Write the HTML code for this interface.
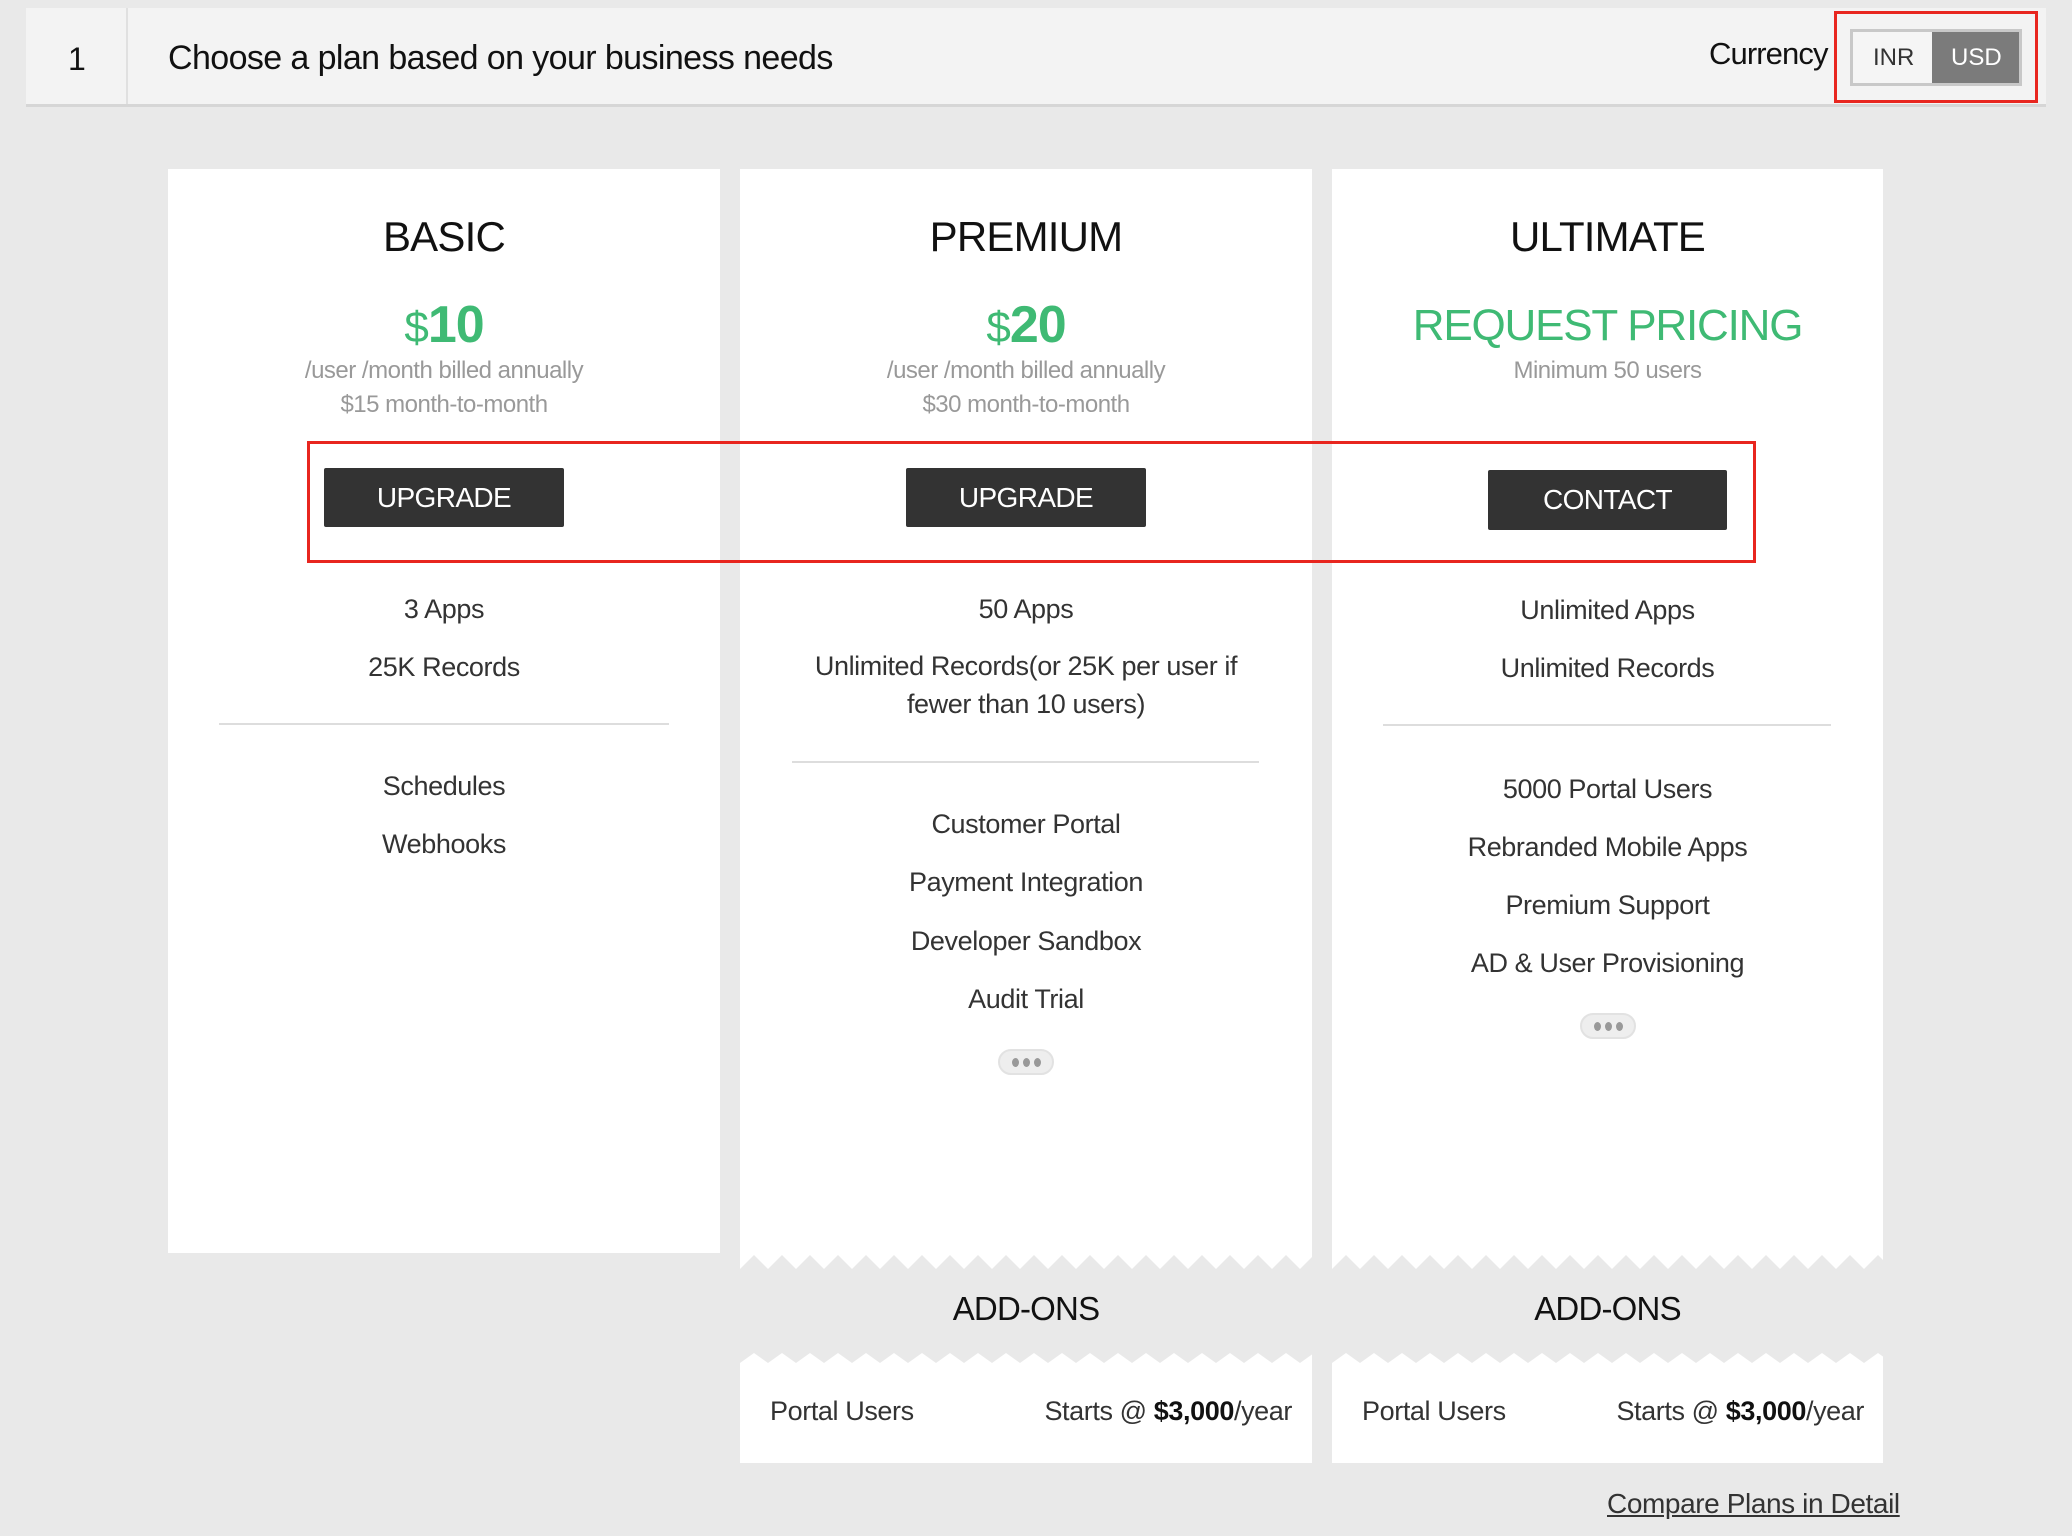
<!DOCTYPE html>
<html><head><meta charset="utf-8"><style>
*{margin:0;padding:0;box-sizing:border-box}
body{width:2072px;height:1536px;background:#e9e9e9;font-family:"Liberation Sans",sans-serif;position:relative;overflow:hidden;color:#222}
.a{position:absolute}
.c{position:absolute;text-align:center;white-space:nowrap}
.card{position:absolute;background:#fff}
.t{font-size:42px;color:#111;letter-spacing:-0.8px}
.p{font-size:52px;font-weight:bold;color:#3fba74;letter-spacing:-1px}
.s{font-size:24px;color:#999;letter-spacing:-0.5px}
.btn{position:absolute;background:#333;color:#fff;font-size:28px;display:flex;align-items:center;justify-content:center;border-radius:2px;letter-spacing:-0.6px}
.f{font-size:27px;color:#333;letter-spacing:-0.4px}
.hr{position:absolute;height:2px;background:#ddd}
.dots{position:absolute;width:56px;height:26px;border-radius:13px;background:#eee;border:2px solid #e2e2e2;display:flex;align-items:center;justify-content:center;gap:4px}
.dots i{width:7px;height:9px;border-radius:50%;background:#999;display:block}
</style></head><body>
<div class="a" style="left:26px;top:8px;width:2020px;height:99px;background:#f3f3f3;border-bottom:3px solid #d6d6d6"></div>
<div class="a" style="left:126px;top:8px;width:2px;height:96px;background:#e0e0e0"></div>
<div class="a" style="left:68px;top:41px;font-size:32px;color:#111">1</div>
<div class="a" style="left:168px;top:39px;font-size:34px;color:#111;letter-spacing:-0.6px">Choose a plan based on your business needs</div>
<div class="a" style="left:1709px;top:36px;font-size:31px;color:#111;letter-spacing:-0.9px">Currency</div>
<div class="a" style="left:1850px;top:29px;width:172px;height:57px;border:3px solid #c8c8c8;background:#f5f5f5"></div>
<div class="a" style="left:1932px;top:32px;width:87px;height:51px;background:#7b7b7b"></div>
<div class="a" style="left:1873px;top:44px;font-size:24px;color:#333">INR</div>
<div class="a" style="left:1951px;top:44px;font-size:24px;color:#fff">USD</div>
<div class="a" style="left:1834px;top:11px;width:204px;height:92px;border:3px solid #e8261f"></div>

<div class="card" style="left:168px;top:169px;width:552px;height:1084px"></div>
<div class="card" style="left:740px;top:169px;width:572px;height:1084px"></div>
<div class="card" style="left:1332px;top:169px;width:551px;height:1084px"></div>
<svg class="a" style="left:740px;top:1253px" width="572" height="16"><defs><pattern id="z1" width="28" height="16" patternUnits="userSpaceOnUse"><polygon points="0,0 28,0 28,16 14,2 0,16" fill="#fff"/></pattern></defs><rect width="572" height="16" fill="url(#z1)"/></svg>
<svg class="a" style="left:1332px;top:1253px" width="551" height="16"><rect width="551" height="16" fill="url(#z1)"/></svg>
<svg class="a" style="left:740px;top:1351px" width="572" height="16"><defs><pattern id="z2" width="28" height="16" patternUnits="userSpaceOnUse"><polygon points="0,16 0,12 14,2 28,12 28,16" fill="#fff"/></pattern></defs><rect width="572" height="16" fill="url(#z2)"/></svg>
<svg class="a" style="left:1332px;top:1351px" width="551" height="16"><rect width="551" height="16" fill="url(#z2)"/></svg>
<div class="card" style="left:740px;top:1366px;width:572px;height:97px"></div>
<div class="card" style="left:1332px;top:1366px;width:551px;height:97px"></div>

<div class="c t" style="left:168px;width:552px;top:213px">BASIC</div>
<div class="c t" style="left:740px;width:572px;top:213px">PREMIUM</div>
<div class="c t" style="left:1332px;width:551px;top:213px">ULTIMATE</div>
<div class="c p" style="left:168px;width:552px;top:295px"><span style="font-weight:normal;font-size:44px">$</span>10</div>
<div class="c p" style="left:740px;width:572px;top:295px"><span style="font-weight:normal;font-size:44px">$</span>20</div>
<div class="c" style="left:1332px;width:551px;top:301px;font-size:44px;color:#3fba74;letter-spacing:-1.2px">REQUEST PRICING</div>
<div class="c s" style="left:168px;width:552px;top:357px">/user /month billed annually</div>
<div class="c s" style="left:168px;width:552px;top:391px">$15 month-to-month</div>
<div class="c s" style="left:740px;width:572px;top:357px">/user /month billed annually</div>
<div class="c s" style="left:740px;width:572px;top:391px">$30 month-to-month</div>
<div class="c s" style="left:1332px;width:551px;top:357px">Minimum 50 users</div>

<div class="btn" style="left:324px;top:468px;width:240px;height:59px">UPGRADE</div>
<div class="btn" style="left:906px;top:468px;width:240px;height:59px">UPGRADE</div>
<div class="btn" style="left:1488px;top:470px;width:239px;height:60px">CONTACT</div>
<div class="a" style="left:307px;top:441px;width:1449px;height:122px;border:3px solid #e8261f"></div>

<div class="c f" style="left:168px;width:552px;top:594px">3 Apps</div>
<div class="c f" style="left:168px;width:552px;top:652px">25K Records</div>
<div class="hr" style="left:219px;top:723px;width:450px"></div>
<div class="c f" style="left:168px;width:552px;top:771px">Schedules</div>
<div class="c f" style="left:168px;width:552px;top:829px">Webhooks</div>

<div class="c f" style="left:740px;width:572px;top:594px">50 Apps</div>
<div class="c f" style="left:740px;width:572px;top:651px">Unlimited Records(or 25K per user if</div>
<div class="c f" style="left:740px;width:572px;top:689px">fewer than 10 users)</div>
<div class="hr" style="left:792px;top:761px;width:467px"></div>
<div class="c f" style="left:740px;width:572px;top:809px">Customer Portal</div>
<div class="c f" style="left:740px;width:572px;top:867px">Payment Integration</div>
<div class="c f" style="left:740px;width:572px;top:926px">Developer Sandbox</div>
<div class="c f" style="left:740px;width:572px;top:984px">Audit Trial</div>
<div class="dots" style="left:998px;top:1049px"><i></i><i></i><i></i></div>

<div class="c f" style="left:1332px;width:551px;top:595px">Unlimited Apps</div>
<div class="c f" style="left:1332px;width:551px;top:653px">Unlimited Records</div>
<div class="hr" style="left:1383px;top:724px;width:448px"></div>
<div class="c f" style="left:1332px;width:551px;top:774px">5000 Portal Users</div>
<div class="c f" style="left:1332px;width:551px;top:832px">Rebranded Mobile Apps</div>
<div class="c f" style="left:1332px;width:551px;top:890px">Premium Support</div>
<div class="c f" style="left:1332px;width:551px;top:948px">AD &amp; User Provisioning</div>
<div class="dots" style="left:1580px;top:1013px"><i></i><i></i><i></i></div>

<div class="c" style="left:740px;width:572px;top:1290px;font-size:33px;color:#111;letter-spacing:-0.8px">ADD-ONS</div>
<div class="c" style="left:1332px;width:551px;top:1290px;font-size:33px;color:#111;letter-spacing:-0.8px">ADD-ONS</div>
<div class="a f" style="left:770px;top:1396px">Portal Users</div>
<div class="a f" style="right:780px;top:1396px">Starts @ <b style="color:#111">$3,000</b>/year</div>
<div class="a f" style="left:1362px;top:1396px">Portal Users</div>
<div class="a f" style="right:208px;top:1396px">Starts @ <b style="color:#111">$3,000</b>/year</div>

<div class="a" style="left:1607px;top:1488px;font-size:28px;color:#333;text-decoration:underline;letter-spacing:-0.4px">Compare Plans in Detail</div>
</body></html>
